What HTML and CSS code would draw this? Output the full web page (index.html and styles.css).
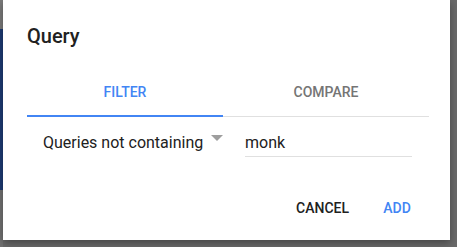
FILE: index.html
```html
<!DOCTYPE html>
<html>
<head>
<meta charset="utf-8">
<link rel="stylesheet" href="styles.css">
</head>
<body>
<div class="page">
  <div class="edge">
    <div class="edge-top"></div>
    <div class="edge-blue"></div>
    <div class="edge-bottom"></div>
  </div>
</div>
<div class="dialog">
  <div class="title">Query</div>
  <div class="tabs">
    <div class="tab active">FILTER</div>
    <div class="tab">COMPARE</div>
  </div>
  <div class="row">
    <div class="select">
      <span class="select-label">Queries not containing</span>
      <span class="arrow"></span>
    </div>
    <div class="input">monk</div>
  </div>
  <div class="actions">
    <div class="btn">CANCEL</div>
    <div class="btn primary">ADD</div>
  </div>
</div>
</body>
</html>
```
FILE: styles.css
```css
html, body {
  margin: 0;
  padding: 0;
}
body {
  width: 457px;
  height: 247px;
  overflow: hidden;
  background: #6a6a6a;
  font-family: Roboto, "Liberation Sans", sans-serif;
  position: relative;
}
.page {
  display: flex;
  height: 247px;
}
.edge {
  width: 3px;
  display: flex;
  flex-direction: column;
}
.edge-top {
  height: 29px;
  background: #7b7b7b;
}
.edge-blue {
  height: 161px;
  background: #1d3b74;
}
.edge-bottom {
  flex: 1;
  background: #727272;
}
.dialog {
  position: absolute;
  left: 3px;
  top: 0;
  width: 447px;
  height: 240px;
  box-sizing: border-box;
  padding: 24px 21px 0 24px;
  background: #fff;
  box-shadow: 0 3px 8px rgba(0, 0, 0, 0.35);
}
.title {
  font-size: 20px;
  line-height: 24px;
  font-weight: 500;
  color: #212121;
}
.tabs {
  margin-top: 20px;
  width: 402px;
  display: flex;
  border-bottom: 1px solid #e0e0e0;
}
.tab {
  flex: 1;
  height: 48px;
  box-sizing: border-box;
  display: flex;
  align-items: center;
  justify-content: center;
  font-size: 14px;
  font-weight: 500;
  color: #757575;
}
.tab.active {
  flex: 0 0 196px;
  color: #4285f4;
  border-bottom: 2px solid #4285f4;
  margin-bottom: -1px;
  height: 49px;
  padding-top: 1px;
}
.row {
  width: 402px;
  box-sizing: border-box;
  padding: 16px 17px 0 16px;
  display: flex;
  align-items: flex-start;
}
.select {
  display: flex;
  align-items: flex-start;
  width: 202px;
}
.select-label {
  font-size: 16px;
  line-height: 20px;
  color: #212121;
}
.arrow {
  margin-left: 8px;
  margin-top: 2px;
  width: 0;
  height: 0;
  border-left: 6px solid transparent;
  border-right: 6px solid transparent;
  border-top: 6px solid #9e9e9e;
}
.input {
  flex: 1;
  font-size: 16px;
  line-height: 20px;
  color: #212121;
  padding-bottom: 3px;
  border-bottom: 1px solid #e0e0e0;
}
.actions {
  width: 402px;
  margin-top: 33px;
  display: flex;
  justify-content: flex-end;
  gap: 8px;
}
.btn {
  min-width: 64px;
  height: 36px;
  box-sizing: border-box;
  padding: 0 8px;
  display: flex;
  align-items: center;
  justify-content: center;
  font-size: 14px;
  font-weight: 500;
  color: #212121;
}
.btn.primary {
  color: #4285f4;
}
```
